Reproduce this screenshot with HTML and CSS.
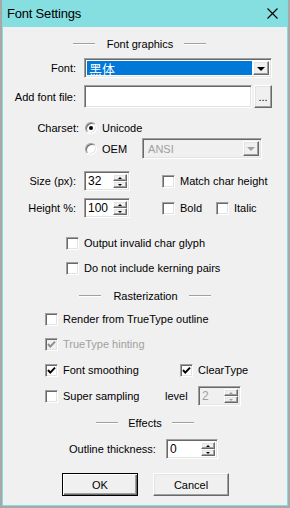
FILE: index.html
```html
<!DOCTYPE html>
<html lang="en">
  <head>
    <meta charset="UTF-8" />
    <title>Font Settings</title>
    <link rel="stylesheet" href="styles.css">
  </head>
  <body>
    <div class="window">
      <div class="titlebar">
        <span class="title">Font Settings</span>
        <svg class="close" width="11" height="11" viewBox="0 0 11 11">
          <path d="M0.5 0.5 L10.5 10.5 M10.5 0.5 L0.5 10.5" stroke="#000" stroke-width="1.1" />
        </svg>
      </div>
      <div class="content">
        <div class="sep sep-graphics">
          <span class="sep-line"></span><span class="sep-text">Font graphics</span><span class="sep-line"></span>
        </div>

        <div class="field row-font">
          <label class="field-label">Font:</label>
          <div class="combo combo-font">
            <div class="combo-value selected">黑体</div>
            <div class="combo-btn"><span class="tri"></span></div>
          </div>
        </div>

        <div class="field row-file">
          <label class="field-label">Add font file:</label>
          <div class="edit edit-file"></div>
          <button class="btn btn-browse">...</button>
        </div>

        <div class="field row-unicode">
          <label class="field-label charset">Charset:</label>
          <div class="radio-item">
            <span class="radio"><span class="dot"></span></span>
            <span>Unicode</span>
          </div>
        </div>

        <div class="field row-oem">
          <div class="radio-item oem">
            <span class="radio"></span>
            <span>OEM</span>
          </div>
          <div class="combo combo-ansi disabled">
            <div class="combo-value">ANSI</div>
            <div class="combo-btn"><span class="tri"></span></div>
          </div>
        </div>

        <div class="field row-size">
          <label class="field-label">Size (px):</label>
          <div class="spin">
            <div class="spin-value">32</div>
            <div class="spin-btns">
              <span class="spin-btn"><span class="tri-up"></span></span>
              <span class="spin-btn"><span class="tri-down"></span></span>
            </div>
          </div>
          <div class="check after-spin">
            <span class="box"></span>
            <span>Match char height</span>
          </div>
        </div>

        <div class="field row-height">
          <label class="field-label">Height %:</label>
          <div class="spin">
            <div class="spin-value">100</div>
            <div class="spin-btns">
              <span class="spin-btn"><span class="tri-up"></span></span>
              <span class="spin-btn"><span class="tri-down"></span></span>
            </div>
          </div>
          <div class="check after-spin bold-check">
            <span class="box"></span>
            <span>Bold</span>
          </div>
          <div class="check">
            <span class="box"></span>
            <span>Italic</span>
          </div>
        </div>

        <div class="row row-invalid">
          <div class="check">
            <span class="box"></span>
            <span>Output invalid char glyph</span>
          </div>
        </div>

        <div class="row row-kerning">
          <div class="check">
            <span class="box"></span>
            <span>Do not include kerning pairs</span>
          </div>
        </div>

        <div class="sep sep-raster">
          <span class="sep-line"></span><span class="sep-text">Rasterization</span><span class="sep-line"></span>
        </div>

        <div class="row row-render">
          <div class="check">
            <span class="box"></span>
            <span>Render from TrueType outline</span>
          </div>
        </div>

        <div class="row row-hinting">
          <div class="check disabled">
            <span class="box">
              <svg width="11" height="11" viewBox="0 0 11 11"><path d="M2 5 L4.3 7.6 L9 2.6" stroke="#8d8d8d" stroke-width="2" fill="none" /></svg>
            </span>
            <span>TrueType hinting</span>
          </div>
        </div>

        <div class="row row-smooth">
          <div class="check smooth-check">
            <span class="box">
              <svg width="11" height="11" viewBox="0 0 11 11"><path d="M2 5 L4.3 7.6 L9 2.6" stroke="#000" stroke-width="2" fill="none" /></svg>
            </span>
            <span>Font smoothing</span>
          </div>
          <div class="check">
            <span class="box">
              <svg width="11" height="11" viewBox="0 0 11 11"><path d="M2 5 L4.3 7.6 L9 2.6" stroke="#000" stroke-width="2" fill="none" /></svg>
            </span>
            <span>ClearType</span>
          </div>
        </div>

        <div class="row row-super">
          <div class="check super-check">
            <span class="box"></span>
            <span>Super sampling</span>
          </div>
          <span class="level">level</span>
          <div class="spin spin-level disabled">
            <div class="spin-value">2</div>
            <div class="spin-btns">
              <span class="spin-btn"><span class="tri-up"></span></span>
              <span class="spin-btn"><span class="tri-down"></span></span>
            </div>
          </div>
        </div>

        <div class="sep sep-effects">
          <span class="sep-line"></span><span class="sep-text">Effects</span><span class="sep-line"></span>
        </div>

        <div class="row row-outline">
          <span class="outline-label">Outline thickness:</span>
          <div class="spin spin-outline">
            <div class="spin-value">0</div>
            <div class="spin-btns">
              <span class="spin-btn"><span class="tri-up"></span></span>
              <span class="spin-btn"><span class="tri-down"></span></span>
            </div>
          </div>
        </div>

        <div class="row row-buttons">
          <button class="btn btn-dialog btn-default">OK</button>
          <button class="btn btn-dialog">Cancel</button>
        </div>
      </div>
    </div>
  </body>
</html>
```

FILE: styles.css
```css
* {
  box-sizing: border-box;
  margin: 0;
  padding: 0;
}
body {
  width: 290px;
  height: 508px;
  overflow: hidden;
  background: #a8a8a8;
  font-family: "Liberation Sans", Arial, sans-serif;
  font-size: 11px;
  color: #000;
}
.window {
  margin-left: 2px;
  width: 286px;
  height: 506px;
  border: 1px solid #83dcdd;
  border-top: none;
  background: #f0f0f0;
  display: flex;
  flex-direction: column;
}
.titlebar {
  height: 27px;
  background: #85dfe0;
  display: flex;
  align-items: center;
  justify-content: space-between;
  padding: 0 9px 1px 4px;
}
.title {
  font-size: 13px;
  letter-spacing: -0.2px;
}
.close {
  margin-top: 1px;
}
.content {
  display: flex;
  flex-direction: column;
}

/* rows */
.row,
.field,
.sep {
  display: flex;
  align-items: center;
  flex-shrink: 0;
}
.field-label {
  width: 73px;
  margin-right: 8px;
  text-align: right;
}
.field-label.charset {
  width: 76px;
  margin-right: 5px;
}

/* section separators */
.sep {
  height: 14px;
  justify-content: center;
}
.sep-line {
  width: 22px;
  height: 2px;
  border-top: 1px solid #a0a0a0;
  border-bottom: 1px solid #fff;
}
.sep-text {
  margin: 0 11px 0 12px;
}
.sep-graphics {
  margin-top: 10px;
  padding-right: 11px;
}
.sep-raster {
  margin-top: 14px;
}
.sep-effects {
  margin-top: 10px;
}
.sep-effects .sep-text {
  margin: 0 10px;
}

/* sunken + raised edges */
.edit,
.combo,
.spin,
.box,
.radio {
  border: 1px solid;
  border-color: #a0a0a0 #fff #fff #a0a0a0;
  box-shadow: inset 1px 1px #696969, inset -1px -1px #e3e3e3;
  background: #fff;
}
.btn,
.combo-btn,
.spin-btn {
  border: 1px solid;
  border-color: #fff #696969 #696969 #fff;
  box-shadow: inset -1px -1px #a0a0a0, inset 1px 1px #e3e3e3;
  background: #f0f0f0;
}
.btn {
  font-family: inherit;
  font-size: 11px;
  color: #000;
}

/* combo boxes */
.combo {
  display: flex;
  padding: 2px;
}
.combo-value {
  flex: 1;
  display: flex;
  align-items: center;
  padding-left: 3px;
}
.combo-btn {
  width: 16px;
  display: flex;
  align-items: center;
  justify-content: center;
}
.tri {
  width: 0;
  height: 0;
  border-left: 4px solid transparent;
  border-right: 4px solid transparent;
  border-top: 4px solid #000;
  margin-top: 1px;
}
.row-font {
  margin-top: 7px;
  height: 20px;
}
.combo-font {
  width: 188px;
  height: 20px;
}
.selected {
  background: #0078d7;
  color: #fff;
  font-family: "Noto Sans CJK SC", "Liberation Sans", sans-serif;
  font-size: 13px;
  padding-left: 2px;
  margin-right: 1px;
}
.combo-ansi {
  width: 120px;
  height: 21px;
  margin-left: 15px;
}
.disabled .combo-value,
.disabled .spin-value {
  color: #a0a0a0;
}
.combo.disabled,
.spin.disabled,
.check.disabled .box {
  background: #f0f0f0;
}
.combo.disabled .tri {
  border-top-color: #a0a0a0;
}

/* add font file */
.row-file {
  margin-top: 7px;
  height: 23px;
}
.edit-file {
  width: 168px;
  height: 23px;
}
.btn-browse {
  width: 18px;
  height: 23px;
  margin-left: 2px;
  line-height: 14px;
}

/* radio buttons */
.radio-item {
  display: flex;
  align-items: center;
  gap: 5px;
}
.radio {
  width: 12px;
  height: 12px;
  border-radius: 50%;
  display: flex;
  align-items: center;
  justify-content: center;
}
.dot {
  width: 4px;
  height: 4px;
  border-radius: 50%;
  background: #000;
}
.row-unicode {
  margin-top: 13px;
  height: 14px;
}
.row-unicode .radio-item {
  margin-left: 1px;
}
.row-oem {
  margin-top: 3px;
  height: 21px;
  padding-left: 82px;
}

/* spin edits */
.spin {
  display: flex;
  height: 20px;
  width: 46px;
  padding: 2px 2px 2px 3px;
}
.spin-value {
  flex: 1;
  display: flex;
  align-items: center;
  font-size: 12px;
}
.spin-btns {
  width: 14px;
  display: flex;
  flex-direction: column;
}
.spin-btn {
  flex: 1;
  display: flex;
  align-items: center;
  justify-content: center;
}
.tri-up,
.tri-down {
  width: 0;
  height: 0;
  border-left: 2px solid transparent;
  border-right: 2px solid transparent;
}
.tri-up {
  border-bottom: 2px solid #000;
}
.tri-down {
  border-top: 2px solid #000;
}
.disabled .tri-up {
  border-bottom-color: #a0a0a0;
}
.disabled .tri-down {
  border-top-color: #a0a0a0;
}
.row-size {
  margin-top: 12px;
  height: 20px;
}
.row-height {
  margin-top: 7px;
  height: 20px;
}
.after-spin {
  margin-left: 32px;
}
.bold-check {
  width: 54px;
}

/* checkboxes */
.check {
  display: flex;
  align-items: center;
  gap: 5px;
}
.box {
  width: 13px;
  height: 13px;
  display: flex;
  align-items: center;
  justify-content: center;
}
.check.disabled {
  color: #a0a0a0;
}
.row-invalid {
  margin-top: 18px;
  height: 14px;
  padding-left: 63px;
}
.row-kerning {
  margin-top: 11px;
  height: 14px;
  padding-left: 63px;
}
.row-render {
  margin-top: 9px;
  height: 14px;
  padding-left: 42px;
}
.row-hinting {
  margin-top: 11px;
  height: 14px;
  padding-left: 42px;
}
.row-smooth {
  margin-top: 12px;
  height: 14px;
  padding-left: 42px;
}
.smooth-check {
  width: 135px;
}
.row-super {
  margin-top: 9px;
  height: 20px;
  padding-left: 42px;
}
.super-check {
  width: 120px;
}
.level {
  width: 33px;
}
.spin-level {
  width: 43px;
}

/* outline */
.row-outline {
  margin-top: 9px;
  height: 20px;
  padding-left: 66px;
}
.outline-label {
  width: 97px;
}
.spin-outline {
  width: 52px;
}

/* dialog buttons */
.row-buttons {
  margin-top: 14px;
  padding-left: 59px;
  gap: 15px;
}
.btn-dialog {
  width: 76px;
  height: 23px;
}
.btn-default {
  outline: 1px solid #000;
  outline-offset: -1px;
  border-color: #000;
  box-shadow: inset 1px 1px #fff, inset -1px -1px #696969, inset -2px -2px #a0a0a0;
}
```
